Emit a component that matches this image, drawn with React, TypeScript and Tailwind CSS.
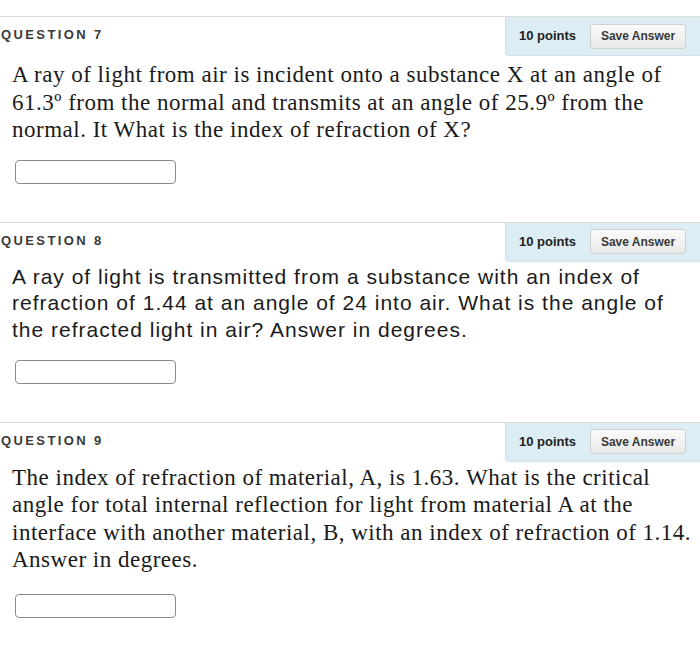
import React from "react";

type Q = { n: number; serif: boolean; lines: string[]; pt: string; mt: string };

const questions: Q[] = [
  {
    n: 7,
    serif: true,
    pt: "pt-[4px]",
    mt: "mt-[16px]",
    lines: [
      "A ray of light from air is incident onto a substance X at an angle of",
      "61.3º from the normal and transmits at an angle of 25.9º from the",
      "normal. It What is the index of refraction of X?",
    ],
  },
  {
    n: 8,
    serif: false,
    pt: "pt-[1px]",
    mt: "mt-[16px]",
    lines: [
      "A ray of light is transmitted from a substance with an index of",
      "refraction of 1.44 at an angle of 24 into air. What is the angle of",
      "the refracted light in air? Answer in degrees.",
    ],
  },
  {
    n: 9,
    serif: true,
    pt: "pt-[1px]",
    mt: "mt-[20px]",
    lines: [
      "The index of refraction of material, A, is 1.63. What is the critical",
      "angle for total internal reflection for light from material A at the",
      "interface with another material, B, with an index of refraction of 1.14.",
      "Answer in degrees.",
    ],
  },
];

function Question({ q }: { q: Q }) {
  return (
    <div className="border-t border-[#dcdcdc]">
      <div className="flex h-[40px] items-start justify-between">
        <div
          className="pt-[8px] pl-[1px] text-[13px] font-bold tracking-[2.4px] text-[#3a3a3a]"
          style={{ fontFamily: '"Liberation Sans", Arial, sans-serif' }}
        >
          QUESTION {q.n}
        </div>
        <div
          className="flex h-[39px] w-[195px] items-center rounded-bl-[4px] border-b border-l border-[#cfe0e6] bg-[#dcedf3] pl-[13px]"
          style={{ fontFamily: '"Liberation Sans", Arial, sans-serif' }}
        >
          <span className="text-[13px] font-bold text-[#222]">10 points</span>
          <button className="ml-[14px] h-[25px] w-[96px] rounded-[3px] border border-[#cfcfcf] bg-gradient-to-b from-[#fafafa] to-[#e9e9e9] text-[12px] font-bold text-[#3a3a3a]">
            Save Answer
          </button>
        </div>
      </div>
      <div className={`pl-[12px] ${q.pt}`}>
        <div
          className={
            q.serif
              ? "text-[23px] leading-[27.5px] tracking-[0.5px] text-[#1a1a1a] whitespace-nowrap"
              : "text-[21px] leading-[26.7px] tracking-[1px] text-[#1a1a1a] whitespace-nowrap"
          }
          style={{
            fontFamily: q.serif
              ? '"Liberation Serif", "Times New Roman", serif'
              : '"Liberation Sans", Arial, sans-serif',
          }}
        >
          {q.lines.map((l, i) => (
            <div key={i}>{l}</div>
          ))}
        </div>
        <div className={`${q.mt} ml-[3px] h-[24px] w-[161px] rounded-[4px] border border-[#8a8a8a] bg-white`} />
      </div>
      <div className="h-[38px]" />
    </div>
  );
}

export default function App() {
  return (
    <div className="h-[647px] w-[700px] overflow-hidden bg-white pt-[16px]">
      {questions.map((q) => (
        <Question key={q.n} q={q} />
      ))}
    </div>
  );
}
